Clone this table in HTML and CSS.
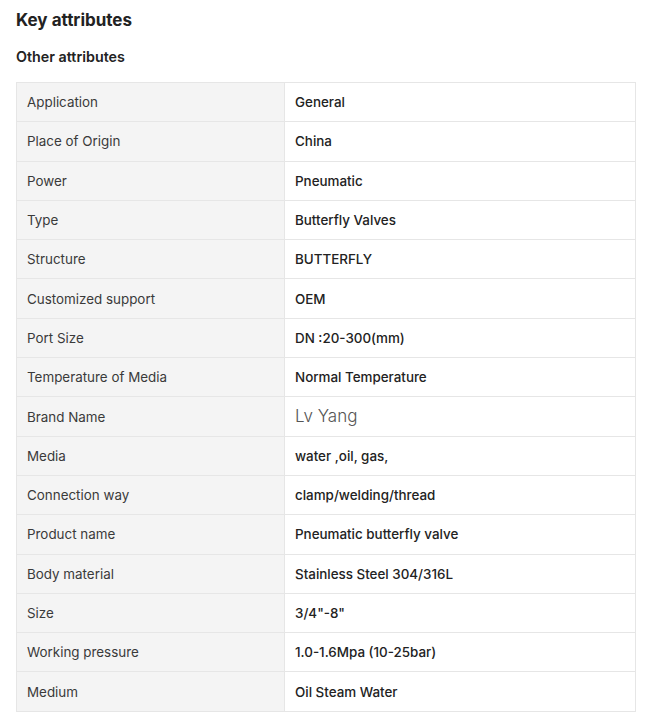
FILE: index.html
```html
<!DOCTYPE html>
<html>
<head>
<meta charset="utf-8">
<link rel="stylesheet" href="styles.css">
</head>
<body>
<div class="wrap">
  <h2 class="title">Key attributes</h2>
  <h3 class="subtitle">Other attributes</h3>
  <table class="attrs">
    <tr><td class="k">Application</td><td class="v">General</td></tr>
    <tr><td class="k">Place of Origin</td><td class="v">China</td></tr>
    <tr><td class="k">Power</td><td class="v">Pneumatic</td></tr>
    <tr><td class="k">Type</td><td class="v">Butterfly Valves</td></tr>
    <tr><td class="k">Structure</td><td class="v">BUTTERFLY</td></tr>
    <tr><td class="k">Customized support</td><td class="v">OEM</td></tr>
    <tr><td class="k">Port Size</td><td class="v">DN :20-300(mm)</td></tr>
    <tr><td class="k">Temperature of Media</td><td class="v">Normal Temperature</td></tr>
    <tr><td class="k">Brand Name</td><td class="v"><span class="brand">Lv Yang</span></td></tr>
    <tr><td class="k">Media</td><td class="v">water ,oil, gas,</td></tr>
    <tr><td class="k">Connection way</td><td class="v">clamp/welding/thread</td></tr>
    <tr><td class="k">Product name</td><td class="v">Pneumatic butterfly valve</td></tr>
    <tr><td class="k">Body material</td><td class="v">Stainless Steel 304/316L</td></tr>
    <tr><td class="k">Size</td><td class="v">3/4"-8"</td></tr>
    <tr><td class="k">Working pressure</td><td class="v">1.0-1.6Mpa (10-25bar)</td></tr>
    <tr><td class="k">Medium</td><td class="v">Oil Steam Water</td></tr>
  </table>
</div>
</body>
</html>
```
FILE: styles.css
```css
html, body {
  margin: 0;
  padding: 0;
  background: #fff;
}
body {
  font-family: Inter, "Liberation Sans", sans-serif;
  color: #222;
}
.wrap {
  padding: 0 14px 0 16px;
}
.title {
  margin: 0;
  padding-top: 9px;
  font-size: 17px;
  line-height: 22px;
  font-weight: 700;
  color: #222;
}
.subtitle {
  margin: 16px 0 0;
  font-size: 14.3px;
  line-height: 20px;
  font-weight: 600;
  color: #222;
}
.attrs {
  margin-top: 15px;
  width: 620px;
  border-collapse: collapse;
  font-size: 13.4px;
}
.attrs td {
  border: 1px solid #e6e6e6;
  height: 39.3px;
  padding: 0 10px;
  line-height: 18px;
  box-sizing: border-box;
}
.attrs .k {
  width: 268px;
  background: #f4f4f4;
  color: #3a3a3a;
  font-weight: 400;
}
.attrs .v {
  background: #fff;
  color: #222;
  font-weight: 500;
}
.brand {
  font-size: 17px;
  font-weight: 300;
  color: #555;
}
```
